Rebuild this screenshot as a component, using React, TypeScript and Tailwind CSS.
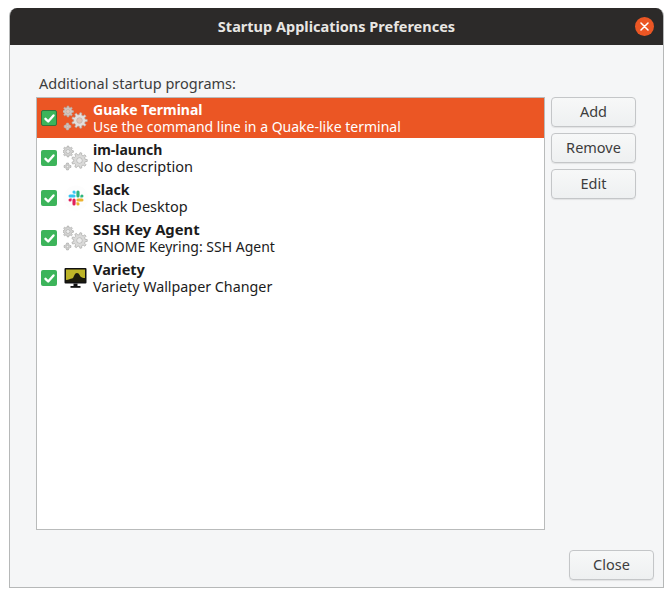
import React from "react";

function gearPath(cx: number, cy: number, r: number, n: number) {
  const out: string[] = [];
  const inner = r * 0.74;
  const step = (Math.PI * 2) / n;
  for (let i = 0; i < n; i++) {
    const a = i * step;
    const pts: [number, number][] = [
      [inner, a - step * 0.3],
      [r, a - step * 0.17],
      [r, a + step * 0.17],
      [inner, a + step * 0.3],
    ];
    pts.forEach(([rad, t], j) => {
      const x = (cx + rad * Math.cos(t)).toFixed(2);
      const y = (cy + rad * Math.sin(t)).toFixed(2);
      out.push(`${i === 0 && j === 0 ? "M" : "L"}${x} ${y}`);
    });
  }
  return out.join("") + "Z";
}

function Gear({ cx, cy, r, n, fill, line, hole }: { cx: number; cy: number; r: number; n: number; fill: string; line: string; hole: string }) {
  return (
    <g>
      <path d={gearPath(cx, cy, r, n)} fill={fill} stroke={line} strokeWidth="0.7" strokeLinejoin="round" />
      <circle cx={cx} cy={cy} r={r * 0.36} fill={hole} stroke={line} strokeWidth="0.6" />
    </g>
  );
}

function Gears({ selected }: { selected?: boolean }) {
  const fill = selected ? "#cfc6c1" : "#d4d4d3";
  const big = selected ? "#e4dfdc" : "#dadad9";
  const line = selected ? "#b9aaa3" : "#a9a9a7";
  const hole = selected ? "#e3c3b5" : "#ececec";
  return (
    <svg width="26" height="28" viewBox="0 0 26 28" className="shrink-0">
      <Gear cx={5} cy={7.500} r={5.500} n={8} fill={fill} line={line} hole={hole} />
      <Gear cx={16.500} cy={16.500} r={7.800} n={9} fill={big} line={line} hole={hole} />
      <Gear cx={4.500} cy={22.500} r={3.500} n={4} fill={fill} line={line} hole={hole} />
    </svg>
  );
}

function Slack() {
  return (
    <svg width="26" height="26" viewBox="0 0 26 26" className="shrink-0">
      <circle cx="13" cy="13" r="12.500" fill="#fdfdfd" />
      <g transform="translate(5.500 5.500) scale(0.625)">
        <path fill="#e01e5a" d="M5.042 15.165a2.528 2.528 0 0 1-2.52 2.523A2.528 2.528 0 0 1 0 15.165a2.527 2.527 0 0 1 2.522-2.52h2.52v2.52zM6.313 15.165a2.527 2.527 0 0 1 2.521-2.52 2.527 2.527 0 0 1 2.521 2.52v6.313A2.528 2.528 0 0 1 8.834 24a2.528 2.528 0 0 1-2.521-2.522v-6.313z" />
        <path fill="#36c5f0" d="M8.834 5.042a2.528 2.528 0 0 1-2.521-2.52A2.528 2.528 0 0 1 8.834 0a2.528 2.528 0 0 1 2.521 2.522v2.52H8.834zM8.834 6.313a2.528 2.528 0 0 1 2.521 2.521 2.528 2.528 0 0 1-2.521 2.521H2.522A2.528 2.528 0 0 1 0 8.834a2.528 2.528 0 0 1 2.522-2.521h6.312z" />
        <path fill="#2eb67d" d="M18.956 8.834a2.528 2.528 0 0 1 2.522-2.521A2.528 2.528 0 0 1 24 8.834a2.528 2.528 0 0 1-2.522 2.521h-2.522V8.834zM17.688 8.834a2.528 2.528 0 0 1-2.523 2.521 2.527 2.527 0 0 1-2.52-2.521V2.522A2.527 2.527 0 0 1 15.165 0a2.528 2.528 0 0 1 2.523 2.522v6.312z" />
        <path fill="#ecb22e" d="M15.165 18.956a2.528 2.528 0 0 1 2.523 2.522A2.528 2.528 0 0 1 15.165 24a2.527 2.527 0 0 1-2.52-2.522v-2.522h2.52zM15.165 17.688a2.527 2.527 0 0 1-2.52-2.523 2.526 2.526 0 0 1 2.52-2.52h6.313A2.527 2.527 0 0 1 24 15.165a2.528 2.528 0 0 1-2.522 2.523h-6.313z" />
      </g>
    </svg>
  );
}

function Variety() {
  return (
    <svg width="26" height="26" viewBox="0 0 26 26" className="shrink-0">
      <rect x="1.500" y="3" width="22" height="15.500" rx="1" fill="#111" />
      <rect x="3" y="4.500" width="19" height="12.500" fill="#bdb428" />
      <path d="M3 15c3 0 4-1.500 6-1.500 2 0 2-5.500 5-5.500 2.500 0 2.500 3 4 4 1.500 1 3 1 4 1v4H3z" fill="#1b1a0c" />
      <path d="M10.500 18.500h4v2.500h-4z" fill="#111" />
      <path d="M7.500 21h10v1.800h-10z" fill="#111" />
    </svg>
  );
}

function Check({ selected }: { selected?: boolean }) {
  return (
    <span className={`flex h-[16px] w-[16px] shrink-0 items-center justify-center rounded-[2px] bg-[#3cb45a] ${selected ? "border border-[#37703a]" : ""}`}>
      <svg width="13" height="13" viewBox="0 0 13 13">
        <path d="M2.500 6.800 5.200 9.500 10.500 3.500" fill="none" stroke="#fff" strokeWidth="2.400" strokeLinecap="round" strokeLinejoin="round" />
      </svg>
    </span>
  );
}

function Row({ title, sub, icon, selected, titleSize, subSize }: { title: string; sub: string; icon: React.ReactNode; selected?: boolean; titleSize: string; subSize: string }) {
  return (
    <div className={`flex h-[40px] items-center pl-[4px] ${selected ? "bg-[#eb5624] text-white" : "text-[#1c1c1c]"}`}>
      <Check selected={selected} />
      <span className="ml-[6px] flex w-[26px] justify-center">{icon}</span>
      <div className="ml-[4px] flex flex-col whitespace-nowrap">
        <span className={`font-bold leading-[17px] ${titleSize}`}>{title}</span>
        <span className={`leading-[17px] ${subSize}`}>{sub}</span>
      </div>
    </div>
  );
}

function Btn({ children }: { children: React.ReactNode }) {
  return (
    <button className="h-[30px] w-[85px] rounded-[4px] border border-[#c4c6c8] bg-gradient-to-b from-[#f7f8f8] to-[#eef0f1] text-[14.500px] text-[#3d3d3d] shadow-[0_1px_1px_rgba(0,0,0,0.08)]">
      {children}
    </button>
  );
}

export default function App() {
  return (
    <div className="h-[598px] w-[672px] overflow-hidden bg-white pl-[9px] pt-[8px] font-['Noto_Sans','Open_Sans',sans-serif]">
      <div className="flex h-[580px] w-[655px] flex-col overflow-hidden rounded-t-[8px] border-x border-b border-[#b6b8b8] bg-[#f5f6f7]">
        <div className="relative -mx-px flex h-[37px] shrink-0 items-center justify-center bg-[#2c2a29]">
          <span className="text-[14.500px] font-bold text-[#e8e6e3]">Startup Applications Preferences</span>
          <span className="absolute right-[10px] top-[9px] flex h-[19px] w-[19px] items-center justify-center rounded-full bg-[#eb5624]">
            <svg width="9" height="9" viewBox="0 0 9 9">
              <path d="M1 1l7 7M8 1l-7 7" stroke="#fff" strokeWidth="1.500" strokeLinecap="round" />
            </svg>
          </span>
        </div>
        <div className="flex flex-1 flex-col pl-[26px]">
          <div className="pl-[3px] pt-[28px] text-[14.500px] leading-[20px] text-[#3d3d3d]">Additional startup programs:</div>
          <div className="mt-[4px] flex items-start gap-[6px]">
            <div className="h-[433px] w-[509px] border border-[#b9bbbb] bg-white">
              <Row selected titleSize="text-[14px]" subSize="text-[14px]" title="Guake Terminal" sub="Use the command line in a Quake-like terminal" icon={<Gears selected />} />
              <Row titleSize="text-[14px]" subSize="text-[14.500px]" title="im-launch" sub="No description" icon={<Gears />} />
              <Row titleSize="text-[14.200px]" subSize="text-[14.500px]" title="Slack" sub="Slack Desktop" icon={<Slack />} />
              <Row titleSize="text-[14.800px]" subSize="text-[14px]" title="SSH Key Agent" sub="GNOME Keyring: SSH Agent" icon={<Gears />} />
              <Row titleSize="text-[14.500px]" subSize="text-[14.300px]" title="Variety" sub="Variety Wallpaper Changer" icon={<Variety />} />
            </div>
            <div className="flex flex-col gap-[6px]">
              <Btn>Add</Btn>
              <Btn>Remove</Btn>
              <Btn>Edit</Btn>
            </div>
          </div>
          <div className="mr-[9px] mt-[20px] flex justify-end">
            <Btn>Close</Btn>
          </div>
        </div>
      </div>
    </div>
  );
}
